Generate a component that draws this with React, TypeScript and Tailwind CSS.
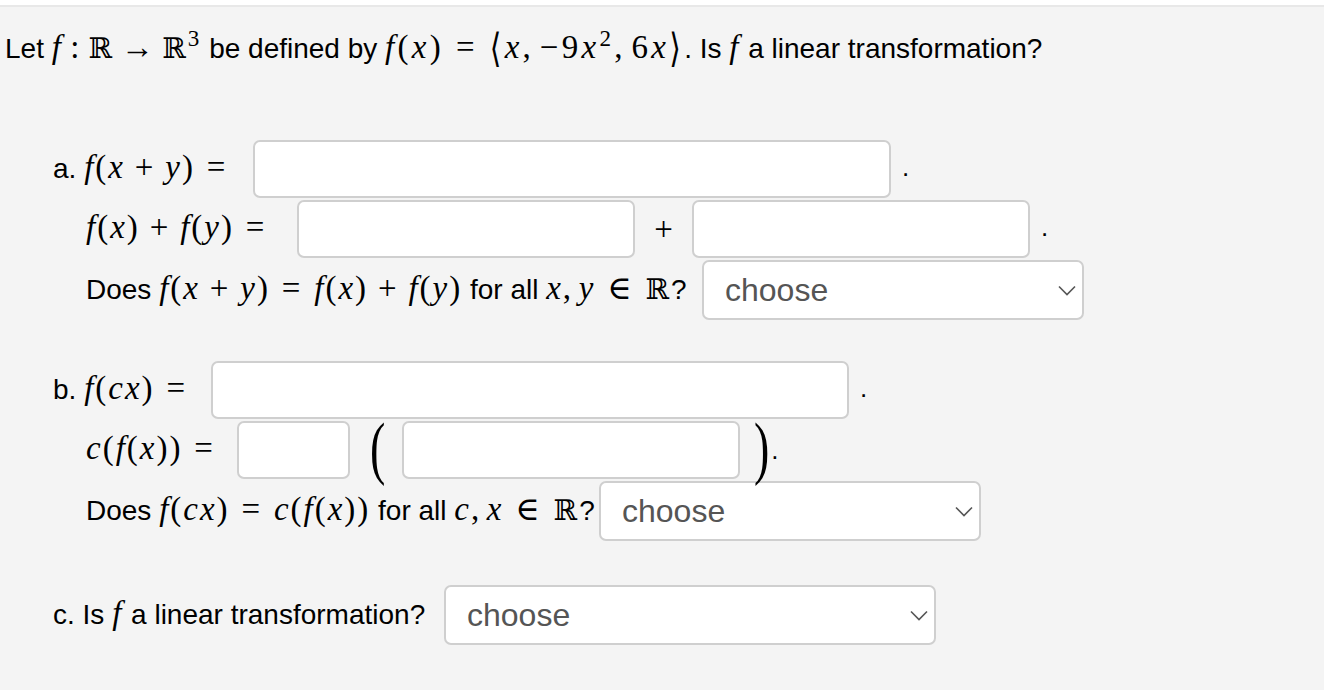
import type { ReactNode } from 'react'

const M = ({ children, t = 'tracking-[0.06em]' }: { children: ReactNode; t?: string }) => (
  <span className={`font-['Liberation_Serif','DejaVu_Serif',serif] text-[33px] ${t} leading-none whitespace-nowrap`}>
    {children}
  </span>
)

const V = ({ children }: { children: ReactNode }) => <i className="italic">{children}</i>

const Rel = ({ c, m = 'mx-[0.36em]' }: { c: string; m?: string }) => <span className={m}>{c}</span>
const Bin = ({ c }: { c: string }) => <span className="mx-[0.3em]">{c}</span>
const RR = () => <span className="font-['DejaVu_Serif',serif] text-[0.86em]">ℝ</span>
const Sp = () => <span className="ml-[0.17em]" />

const Field = ({ w }: { w: string }) => (
  <input
    type="text"
    className={`h-[58px] ${w} shrink-0 rounded-[7px] border-2 border-[#cfcfcf] bg-white outline-none`}
  />
)

const Choose = ({ w }: { w: string }) => (
  <div
    className={`h-[60px] ${w} shrink-0 flex items-center justify-between rounded-[7px] border-2 border-[#cfcfcf] bg-white pl-[21px] pr-[6px]`}
  >
    <span className="text-[32px] text-[#555]">choose</span>
    <svg width="18" height="11" viewBox="0 0 18 11" fill="none">
      <path d="M1 1.5 L9 9.5 L17 1.5" stroke="#555" strokeWidth="1.6" />
    </svg>
  </div>
)

const Dot = () => <span className="ml-[11px] self-end mb-[18px] text-[26px] leading-none">.</span>

const BigParen = ({ c }: { c: string }) => (
  <span className="inline-block scale-y-[1.5] font-['Liberation_Serif',serif] text-[46px] leading-none">
    {c}
  </span>
)

export default function App() {
  return (
    <div className="min-h-[690px] w-full bg-[#f4f4f4] font-['Liberation_Sans',Arial,sans-serif] text-black">
      <div className="h-[7px] bg-white border-b-2 border-[#e8e8e8]" />

      <div className="pl-[5px] pt-[24px] text-[28px] leading-[32px] whitespace-nowrap">
        Let{' '}
        <M>
          <V>f</V>
          <Rel c=":" m="mx-[0.22em]" />
          <RR />
          <Rel c="→" m="mx-[0.2em]" />
          <RR />
          <sup className="text-[0.7em]">3</sup>
        </M>{' '}
        be defined by{' '}
        <M t="tracking-[0.1em]">
          <V>f</V>(<V>x</V>)
          <Rel c="=" />
          <span className="inline-block scale-y-[1.35] font-['DejaVu_Serif',serif] text-[0.9em]">⟨</span>
          <V>x</V>,<Sp />−9
          <V>x</V>
          <sup className="text-[0.7em]">2</sup>,<Sp />6
          <V>x</V>
          <span className="inline-block scale-y-[1.35] font-['DejaVu_Serif',serif] text-[0.9em]">⟩</span>
        </M>
        . Is <M><V>f</V></M> a linear transformation?
      </div>

      {/* part a */}
      <div className="mt-[75px] flex flex-col gap-[2px] pl-[53px] text-[28px] whitespace-nowrap">
        <div className="flex items-center">
          <span className="w-[200px] shrink-0">
            a.{' '}
            <M>
              <V>f</V>(<V>x</V>
              <Bin c="+" />
              <V>y</V>)
              <Rel c="=" />
            </M>
          </span>
          <Field w="w-[638px]" />
          <Dot />
        </div>
        <div className="flex items-center pl-[33px]">
          <span className="w-[211px] shrink-0">
            <M>
              <V>f</V>(<V>x</V>)
              <Bin c="+" />
              <V>f</V>(<V>y</V>)
              <Rel c="=" />
            </M>
          </span>
          <Field w="w-[338px]" />
          <span className="w-[57px] shrink-0 text-center font-['Liberation_Serif',serif] text-[33px] leading-none">+</span>
          <Field w="w-[338px]" />
          <Dot />
        </div>
        <div className="flex items-center pl-[33px]">
          <span className="w-[616px] shrink-0">
            Does{' '}
            <M>
              <V>f</V>(<V>x</V>
              <Bin c="+" />
              <V>y</V>)
              <Rel c="=" />
              <V>f</V>(<V>x</V>)
              <Bin c="+" />
              <V>f</V>(<V>y</V>)
            </M>{' '}
            for all{' '}
            <M>
              <V>x</V>,<Sp />
              <V>y</V>
              <Rel c="∈" />
              <RR />
            </M>
            ?
          </span>
          <Choose w="w-[382px]" />
        </div>
      </div>

      {/* part b */}
      <div className="mt-[41px] flex flex-col gap-[2px] pl-[53px] text-[28px] whitespace-nowrap">
        <div className="flex items-center">
          <span className="w-[158px] shrink-0">
            b.{' '}
            <M>
              <V>f</V>(<V>cx</V>)
              <Rel c="=" />
            </M>
          </span>
          <Field w="w-[638px]" />
          <Dot />
        </div>
        <div className="flex items-center pl-[33px]">
          <span className="w-[151px] shrink-0">
            <M>
              <V>c</V>(<V>f</V>(<V>x</V>))
              <Rel c="=" />
            </M>
          </span>
          <Field w="w-[113px]" />
          <span className="w-[52px] shrink-0 pl-[20px]">
            <BigParen c="(" />
          </span>
          <Field w="w-[338px]" />
          <span className="ml-[14px]">
            <BigParen c=")" />
          </span>
          <span className="ml-[2px] text-[26px] leading-none">.</span>
        </div>
        <div className="flex items-center pl-[33px]">
          <span className="w-[513px] shrink-0">
            Does{' '}
            <M>
              <V>f</V>(<V>cx</V>)
              <Rel c="=" />
              <V>c</V>(<V>f</V>(<V>x</V>))
            </M>{' '}
            for all{' '}
            <M>
              <V>c</V>,<Sp />
              <V>x</V>
              <Rel c="∈" />
              <RR />
            </M>
            ?
          </span>
          <Choose w="w-[382px]" />
        </div>
      </div>

      {/* part c */}
      <div className="mt-[44px] flex items-center pl-[53px] text-[28px] whitespace-nowrap">
        <span className="w-[391px] shrink-0">
          c. Is <M><V>f</V></M> a linear transformation?
        </span>
        <Choose w="w-[492px]" />
      </div>
    </div>
  )
}
